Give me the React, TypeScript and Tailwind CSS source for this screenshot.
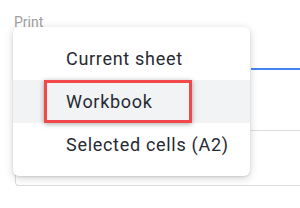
import React from "react";

export default function App() {
  return (
    <div className="relative w-[300px] h-[208px] overflow-hidden bg-white" style={{ fontFamily: "Roboto, 'Noto Sans', sans-serif" }}>
      {/* background page */}
      <div className="pt-[14px] pl-[14px]">
        <div className="text-[14px] leading-[16px] text-[#a0a0a0]">Print</div>
      </div>
      <div className="ml-[15px] mt-[9px] h-[147px] rounded-bl-[4px] border-l border-b border-[#dadce0] flex flex-col">
        <div className="mt-[29px] ml-[235px] h-[2px] bg-[#4285f4]" />
        <div className="mt-[60px] ml-[235px] h-px bg-[#dadce0]" />
      </div>

      {/* menu */}
      <div className="absolute left-[13px] top-[27px] w-[237px] rounded-[6px] bg-white py-[10px] shadow-[0_2px_8px_rgba(0,0,0,0.18),0_1px_2px_rgba(0,0,0,0.1)]">
        <div className="h-[43px] flex items-center pl-[53px] text-[18px] tracking-[0.7px] text-[#262a33]">Current sheet</div>
        <div className="h-[43px] flex items-center pl-[53px] text-[18px] tracking-[0.7px] text-[#262a33] bg-[#f1f3f4]">Workbook</div>
        <div className="h-[43px] flex items-center pl-[53px] text-[18px] tracking-[0.7px] text-[#262a33]">Selected cells (A2)</div>
      </div>

      {/* red highlight box */}
      <div className="absolute left-[44px] top-[80px] w-[148px] h-[43px] border-[3px] border-[#f2474b] shadow-[0_1px_5px_rgba(0,0,0,0.35)]" />
    </div>
  );
}
